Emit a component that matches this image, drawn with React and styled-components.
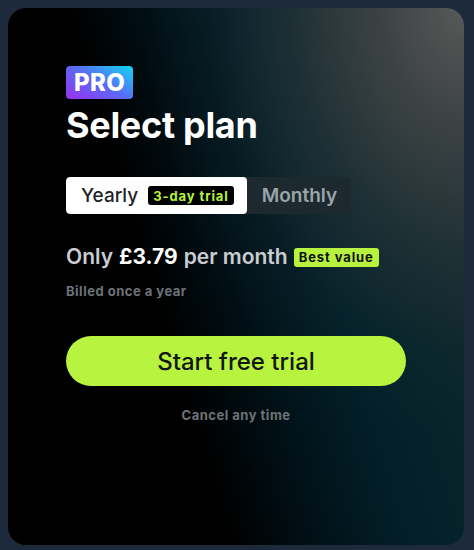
import React from "react";
import styled, { createGlobalStyle } from "styled-components";

const Global = createGlobalStyle`
  html, body { margin: 0; padding: 0; background: #1d2a3b; }
  body { font-family: Inter, "Noto Sans", sans-serif; -webkit-font-smoothing: antialiased; }
  * { box-sizing: border-box; }
`;

const Page = styled.div`
  width: 474px;
  height: 550px;
  padding: 8px 10px 5px 8px;
  display: flex;
`;

const Card = styled.div`
  flex: 1;
  border-radius: 18px;
  padding: 58px 58px 0 58px;
  display: flex;
  flex-direction: column;
  align-items: flex-start;
  background:
    radial-gradient(
      ellipse 70% 80% at 100% 0%,
      rgba(88, 88, 88, 1) 0%,
      rgba(70, 72, 72, 0.85) 25%,
      rgba(52, 60, 62, 0.5) 55%,
      rgba(35, 48, 52, 0.15) 80%,
      rgba(30, 45, 50, 0) 100%
    ),
    linear-gradient(
      73deg,
      #000 0%,
      #000 36%,
      #01131a 52%,
      #03202a 66%,
      #08252b 80%,
      #142a2f 100%
    );
`;

const ProBadge = styled.div`
  height: 33px;
  padding: 0 8px;
  border-radius: 4px;
  background: linear-gradient(30deg, #9a2ff0 0%, #5a6af5 50%, #10d8f5 100%);
  color: #fff;
  font-weight: 800;
  font-size: 24px;
  line-height: 33px;
  letter-spacing: 0.4px;
`;

const Title = styled.h1`
  margin: 6px 0 0;
  color: #fff;
  font-weight: 700;
  font-size: 36px;
  line-height: 41px;
  letter-spacing: -0.3px;
`;

const Toggle = styled.div`
  margin-top: 31px;
  display: flex;
  height: 37px;
  border-radius: 4px;
  overflow: hidden;
  background: #1c2a30;
`;

const Segment = styled.div`
  display: flex;
  align-items: center;
  gap: 10px;
  padding: 0 ${(p) => (p.$active ? "13px" : "14px")} 0 15px;
  background: ${(p) => (p.$active ? "#fff" : "transparent")};
  color: ${(p) => (p.$active ? "#1e2327" : "#9aa5aa")};
  font-weight: ${(p) => (p.$active ? 500 : 600)};
  font-size: 19px;
  border-radius: 4px;
`;

const Tag = styled.span`
  display: inline-flex;
  align-items: center;
  height: 19px;
  padding: 0 5px;
  border-radius: 3px;
  font-weight: 700;
  font-size: 13px;
  letter-spacing: 0.9px;
  background: ${(p) => (p.$dark ? "#000" : "#b6f23e")};
  color: ${(p) => (p.$dark ? "#b6f23e" : "#111")};
`;

const PriceRow = styled.div`
  margin-top: 30px;
  display: flex;
  align-items: center;
  gap: 6px;
  color: #c9cdd1;
  font-weight: 600;
  font-size: 21px;
  line-height: 26px;
`;

const Amount = styled.span`
  color: #fff;
  font-weight: 700;
`;

const Note = styled.div`
  margin-top: ${(p) => p.$mt || 0}px;
  color: #6d7378;
  font-weight: 700;
  font-size: 13px;
  letter-spacing: 0.5px;
  line-height: 16px;
  align-self: ${(p) => (p.$center ? "center" : "flex-start")};
`;

const Button = styled.button`
  margin-top: 37px;
  width: 100%;
  height: 50px;
  border: none;
  border-radius: 25px;
  background: #b8f33f;
  color: #121612;
  font-family: inherit;
  font-weight: 500;
  font-size: 24px;
  cursor: pointer;
`;

export default function App() {
  return (
    <>
      <Global />
      <Page>
        <Card>
          <ProBadge>PRO</ProBadge>
          <Title>Select plan</Title>
          <Toggle>
            <Segment $active>
              Yearly <Tag $dark>3-day trial</Tag>
            </Segment>
            <Segment>Monthly</Segment>
          </Toggle>
          <PriceRow>
            <span>Only</span>
            <Amount>£3.79</Amount>
            <span>per month</span>
            <Tag>Best value</Tag>
          </PriceRow>
          <Note $mt={13}>Billed once a year</Note>
          <Button>Start free trial</Button>
          <Note $mt={21} $center>Cancel any time</Note>
        </Card>
      </Page>
    </>
  );
}
